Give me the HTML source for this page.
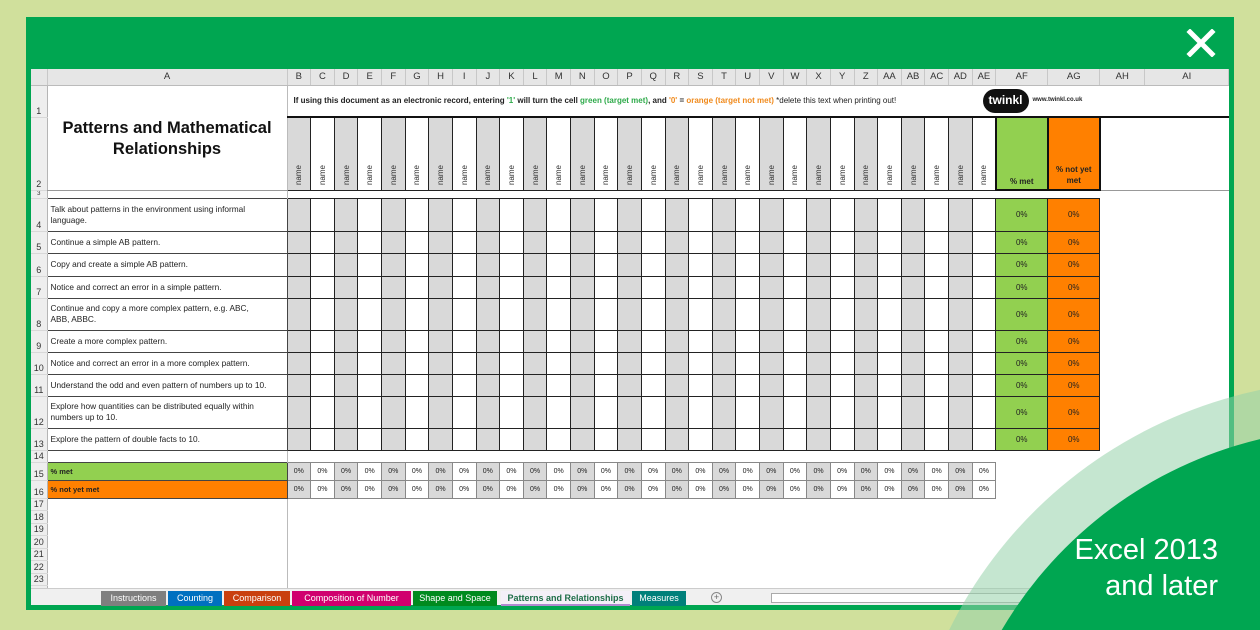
<!DOCTYPE html>
<html style="width:1260px;height:630px;overflow:hidden"><head><meta charset="utf-8">
<style>
*{box-sizing:border-box;margin:0;padding:0}
body{width:1260px;height:630px;background:#d0e09c;overflow:hidden;font-family:"Liberation Sans",Arial,sans-serif}
#wrap{position:relative;width:1260px;height:630px;overflow:hidden}
#frame{position:absolute;left:26px;top:17px;width:1208px;height:593px;background:#00a651}
#sheet{position:absolute;left:31px;top:69px;width:1198px;height:519px;background:#fff;overflow:hidden}
table{border-collapse:collapse;table-layout:fixed;width:1198px}
td{padding:0;overflow:hidden;white-space:nowrap;font-size:8px;color:#222;text-align:center;vertical-align:middle}
tr.h td{background:#e6e6e6;border-right:1px solid #c8c8c8;border-bottom:1px solid #bbb;font-size:9.5px;color:#333;height:16px}
td.rh{background:#eeeeee;border-right:1px solid #b5b5b5;border-bottom:1px solid #d8d8d8;font-size:9px;color:#333;vertical-align:bottom;padding-bottom:1px}
td.a{text-align:left;padding-left:3px;padding-right:20px;white-space:normal;line-height:11px;border:1px solid #444;font-size:8.3px}
.d td.c{border:1px solid #222}
td.g{background:#d9d9d9}
td.af{background:#92d050;border:1px solid #222}
td.ag{background:#ff8000;border:1px solid #222}
td.n{border:1px solid #222;vertical-align:bottom;padding-bottom:2px}
td.n i{font-style:normal;writing-mode:vertical-rl;transform:rotate(180deg);display:inline-block;font-size:8px;color:#333}
td.p{border:1px solid #888;font-size:7px}
#tabs{position:absolute;left:31px;top:588px;width:1198px;height:17px;background:#f0f0f0;border-top:1px solid #ccc}
.tab{position:absolute;top:2px;height:15px;color:#fff;font-size:9px;text-align:center;line-height:14px}
</style></head><body><div id="wrap">
<div id="frame"></div>
<svg style="position:absolute;left:1186px;top:29px" width="30" height="28"><path d="M4 3 L26 25 M26 3 L4 25" stroke="#fff" stroke-width="5" stroke-linecap="square"/></svg>
<div id="sheet">
<table>
<colgroup><col style="width:16px"><col style="width:240px">
<col span="30" style="width:23.633px">
<col style="width:52px"><col style="width:52px"><col style="width:45px"><col style="width:84px"></colgroup>
<tr class="h"><td></td><td>A</td><td>B</td><td>C</td><td>D</td><td>E</td><td>F</td><td>G</td><td>H</td><td>I</td><td>J</td><td>K</td><td>L</td><td>M</td><td>N</td><td>O</td><td>P</td><td>Q</td><td>R</td><td>S</td><td>T</td><td>U</td><td>V</td><td>W</td><td>X</td><td>Y</td><td>Z</td><td>AA</td><td>AB</td><td>AC</td><td>AD</td><td>AE</td><td>AF</td><td>AG</td><td>AH</td><td>AI</td></tr>
<tr style="height:32px"><td class="rh">1</td><td rowspan="2" style="vertical-align:top;padding-top:32px;font-size:16.5px;font-weight:bold;white-space:normal;line-height:21px;color:#111;border-right:1px solid #bbb;border-bottom:1px solid #999">Patterns and Mathematical Relationships</td>
<td colspan="34" style="text-align:left;padding-left:6px;font-size:8px;font-weight:bold;position:relative;border-bottom:2px solid #111">If using this document as an electronic record, entering <span style="color:#2eaa4a">'1'</span> will turn the cell <span style="color:#2eaa4a">green (target met)</span>, and <span style="color:#f08a1c">'0'</span> = <span style="color:#f08a1c">orange (target not met)</span> <span style="font-weight:normal">*delete this text when printing out!</span>
<span style="position:absolute;left:695px;top:3px;width:46px;height:24px;background:#111;border-radius:12px;color:#fff;font-size:12px;line-height:22px;text-align:center;font-weight:bold">twinkl</span><span style="position:absolute;left:745px;top:11px;font-size:6px;font-weight:bold">www.twinkl.co.uk</span></td></tr>
<tr style="height:73px" class="d"><td class="rh">2</td>
<td class="g n"><i>name</i></td><td class="n"><i>name</i></td><td class="g n"><i>name</i></td><td class="n"><i>name</i></td><td class="g n"><i>name</i></td><td class="n"><i>name</i></td><td class="g n"><i>name</i></td><td class="n"><i>name</i></td><td class="g n"><i>name</i></td><td class="n"><i>name</i></td><td class="g n"><i>name</i></td><td class="n"><i>name</i></td><td class="g n"><i>name</i></td><td class="n"><i>name</i></td><td class="g n"><i>name</i></td><td class="n"><i>name</i></td><td class="g n"><i>name</i></td><td class="n"><i>name</i></td><td class="g n"><i>name</i></td><td class="n"><i>name</i></td><td class="g n"><i>name</i></td><td class="n"><i>name</i></td><td class="g n"><i>name</i></td><td class="n"><i>name</i></td><td class="g n"><i>name</i></td><td class="n"><i>name</i></td><td class="g n"><i>name</i></td><td class="n"><i>name</i></td><td class="g n"><i>name</i></td><td class="n"><i>name</i></td>
<td class="af" style="vertical-align:bottom;padding-bottom:3px;font-weight:bold;border:2px solid #111">% met</td><td class="ag" style="vertical-align:bottom;padding-bottom:3px;font-weight:bold;white-space:normal;line-height:11px;border:2px solid #111">% not yet met</td><td style="border-bottom:1px solid #999"></td><td style="border-bottom:1px solid #999"></td></tr>
<tr style="height:7px"><td class="rh" style="font-size:6px;line-height:6px">3</td><td style="border-right:1px solid #bbb"></td><td colspan="34"></td></tr>

<tr style="height:33px" class="d"><td class="rh">4</td><td class="a">Talk about patterns in the environment using informal language.</td><td class="c g"></td><td class="c"></td><td class="c g"></td><td class="c"></td><td class="c g"></td><td class="c"></td><td class="c g"></td><td class="c"></td><td class="c g"></td><td class="c"></td><td class="c g"></td><td class="c"></td><td class="c g"></td><td class="c"></td><td class="c g"></td><td class="c"></td><td class="c g"></td><td class="c"></td><td class="c g"></td><td class="c"></td><td class="c g"></td><td class="c"></td><td class="c g"></td><td class="c"></td><td class="c g"></td><td class="c"></td><td class="c g"></td><td class="c"></td><td class="c g"></td><td class="c"></td><td class="af">0%</td><td class="ag">0%</td><td></td><td></td></tr>
<tr style="height:22px" class="d"><td class="rh">5</td><td class="a">Continue a simple AB pattern.</td><td class="c g"></td><td class="c"></td><td class="c g"></td><td class="c"></td><td class="c g"></td><td class="c"></td><td class="c g"></td><td class="c"></td><td class="c g"></td><td class="c"></td><td class="c g"></td><td class="c"></td><td class="c g"></td><td class="c"></td><td class="c g"></td><td class="c"></td><td class="c g"></td><td class="c"></td><td class="c g"></td><td class="c"></td><td class="c g"></td><td class="c"></td><td class="c g"></td><td class="c"></td><td class="c g"></td><td class="c"></td><td class="c g"></td><td class="c"></td><td class="c g"></td><td class="c"></td><td class="af">0%</td><td class="ag">0%</td><td></td><td></td></tr>
<tr style="height:23px" class="d"><td class="rh">6</td><td class="a">Copy and create a simple AB pattern.</td><td class="c g"></td><td class="c"></td><td class="c g"></td><td class="c"></td><td class="c g"></td><td class="c"></td><td class="c g"></td><td class="c"></td><td class="c g"></td><td class="c"></td><td class="c g"></td><td class="c"></td><td class="c g"></td><td class="c"></td><td class="c g"></td><td class="c"></td><td class="c g"></td><td class="c"></td><td class="c g"></td><td class="c"></td><td class="c g"></td><td class="c"></td><td class="c g"></td><td class="c"></td><td class="c g"></td><td class="c"></td><td class="c g"></td><td class="c"></td><td class="c g"></td><td class="c"></td><td class="af">0%</td><td class="ag">0%</td><td></td><td></td></tr>
<tr style="height:22px" class="d"><td class="rh">7</td><td class="a">Notice and correct an error in a simple pattern.</td><td class="c g"></td><td class="c"></td><td class="c g"></td><td class="c"></td><td class="c g"></td><td class="c"></td><td class="c g"></td><td class="c"></td><td class="c g"></td><td class="c"></td><td class="c g"></td><td class="c"></td><td class="c g"></td><td class="c"></td><td class="c g"></td><td class="c"></td><td class="c g"></td><td class="c"></td><td class="c g"></td><td class="c"></td><td class="c g"></td><td class="c"></td><td class="c g"></td><td class="c"></td><td class="c g"></td><td class="c"></td><td class="c g"></td><td class="c"></td><td class="c g"></td><td class="c"></td><td class="af">0%</td><td class="ag">0%</td><td></td><td></td></tr>
<tr style="height:32px" class="d"><td class="rh">8</td><td class="a">Continue and copy a more complex pattern, e.g. ABC, ABB, ABBC.</td><td class="c g"></td><td class="c"></td><td class="c g"></td><td class="c"></td><td class="c g"></td><td class="c"></td><td class="c g"></td><td class="c"></td><td class="c g"></td><td class="c"></td><td class="c g"></td><td class="c"></td><td class="c g"></td><td class="c"></td><td class="c g"></td><td class="c"></td><td class="c g"></td><td class="c"></td><td class="c g"></td><td class="c"></td><td class="c g"></td><td class="c"></td><td class="c g"></td><td class="c"></td><td class="c g"></td><td class="c"></td><td class="c g"></td><td class="c"></td><td class="c g"></td><td class="c"></td><td class="af">0%</td><td class="ag">0%</td><td></td><td></td></tr>
<tr style="height:22px" class="d"><td class="rh">9</td><td class="a">Create a more complex pattern.</td><td class="c g"></td><td class="c"></td><td class="c g"></td><td class="c"></td><td class="c g"></td><td class="c"></td><td class="c g"></td><td class="c"></td><td class="c g"></td><td class="c"></td><td class="c g"></td><td class="c"></td><td class="c g"></td><td class="c"></td><td class="c g"></td><td class="c"></td><td class="c g"></td><td class="c"></td><td class="c g"></td><td class="c"></td><td class="c g"></td><td class="c"></td><td class="c g"></td><td class="c"></td><td class="c g"></td><td class="c"></td><td class="c g"></td><td class="c"></td><td class="c g"></td><td class="c"></td><td class="af">0%</td><td class="ag">0%</td><td></td><td></td></tr>
<tr style="height:22px" class="d"><td class="rh">10</td><td class="a">Notice and correct an error in a more complex pattern.</td><td class="c g"></td><td class="c"></td><td class="c g"></td><td class="c"></td><td class="c g"></td><td class="c"></td><td class="c g"></td><td class="c"></td><td class="c g"></td><td class="c"></td><td class="c g"></td><td class="c"></td><td class="c g"></td><td class="c"></td><td class="c g"></td><td class="c"></td><td class="c g"></td><td class="c"></td><td class="c g"></td><td class="c"></td><td class="c g"></td><td class="c"></td><td class="c g"></td><td class="c"></td><td class="c g"></td><td class="c"></td><td class="c g"></td><td class="c"></td><td class="c g"></td><td class="c"></td><td class="af">0%</td><td class="ag">0%</td><td></td><td></td></tr>
<tr style="height:22px" class="d"><td class="rh">11</td><td class="a">Understand the odd and even pattern of numbers up to 10.</td><td class="c g"></td><td class="c"></td><td class="c g"></td><td class="c"></td><td class="c g"></td><td class="c"></td><td class="c g"></td><td class="c"></td><td class="c g"></td><td class="c"></td><td class="c g"></td><td class="c"></td><td class="c g"></td><td class="c"></td><td class="c g"></td><td class="c"></td><td class="c g"></td><td class="c"></td><td class="c g"></td><td class="c"></td><td class="c g"></td><td class="c"></td><td class="c g"></td><td class="c"></td><td class="c g"></td><td class="c"></td><td class="c g"></td><td class="c"></td><td class="c g"></td><td class="c"></td><td class="af">0%</td><td class="ag">0%</td><td></td><td></td></tr>
<tr style="height:32px" class="d"><td class="rh">12</td><td class="a">Explore how quantities can be distributed equally within numbers up to 10.</td><td class="c g"></td><td class="c"></td><td class="c g"></td><td class="c"></td><td class="c g"></td><td class="c"></td><td class="c g"></td><td class="c"></td><td class="c g"></td><td class="c"></td><td class="c g"></td><td class="c"></td><td class="c g"></td><td class="c"></td><td class="c g"></td><td class="c"></td><td class="c g"></td><td class="c"></td><td class="c g"></td><td class="c"></td><td class="c g"></td><td class="c"></td><td class="c g"></td><td class="c"></td><td class="c g"></td><td class="c"></td><td class="c g"></td><td class="c"></td><td class="c g"></td><td class="c"></td><td class="af">0%</td><td class="ag">0%</td><td></td><td></td></tr>
<tr style="height:22px" class="d"><td class="rh">13</td><td class="a">Explore the pattern of double facts to 10.</td><td class="c g"></td><td class="c"></td><td class="c g"></td><td class="c"></td><td class="c g"></td><td class="c"></td><td class="c g"></td><td class="c"></td><td class="c g"></td><td class="c"></td><td class="c g"></td><td class="c"></td><td class="c g"></td><td class="c"></td><td class="c g"></td><td class="c"></td><td class="c g"></td><td class="c"></td><td class="c g"></td><td class="c"></td><td class="c g"></td><td class="c"></td><td class="c g"></td><td class="c"></td><td class="c g"></td><td class="c"></td><td class="c g"></td><td class="c"></td><td class="c g"></td><td class="c"></td><td class="af">0%</td><td class="ag">0%</td><td></td><td></td></tr>
<tr style="height:11px"><td class="rh">14</td><td style="border-right:1px solid #bbb"></td><td colspan="34"></td></tr>
<tr style="height:18px"><td class="rh">15</td><td class="a" style="background:#92d050;font-weight:bold;font-size:7.5px">% met</td><td class="p g">0%</td><td class="p">0%</td><td class="p g">0%</td><td class="p">0%</td><td class="p g">0%</td><td class="p">0%</td><td class="p g">0%</td><td class="p">0%</td><td class="p g">0%</td><td class="p">0%</td><td class="p g">0%</td><td class="p">0%</td><td class="p g">0%</td><td class="p">0%</td><td class="p g">0%</td><td class="p">0%</td><td class="p g">0%</td><td class="p">0%</td><td class="p g">0%</td><td class="p">0%</td><td class="p g">0%</td><td class="p">0%</td><td class="p g">0%</td><td class="p">0%</td><td class="p g">0%</td><td class="p">0%</td><td class="p g">0%</td><td class="p">0%</td><td class="p g">0%</td><td class="p">0%</td><td></td><td></td><td></td><td></td></tr>
<tr style="height:18px"><td class="rh">16</td><td class="a" style="background:#ff8000;font-weight:bold;font-size:7.5px">% not yet met</td><td class="p g">0%</td><td class="p">0%</td><td class="p g">0%</td><td class="p">0%</td><td class="p g">0%</td><td class="p">0%</td><td class="p g">0%</td><td class="p">0%</td><td class="p g">0%</td><td class="p">0%</td><td class="p g">0%</td><td class="p">0%</td><td class="p g">0%</td><td class="p">0%</td><td class="p g">0%</td><td class="p">0%</td><td class="p g">0%</td><td class="p">0%</td><td class="p g">0%</td><td class="p">0%</td><td class="p g">0%</td><td class="p">0%</td><td class="p g">0%</td><td class="p">0%</td><td class="p g">0%</td><td class="p">0%</td><td class="p g">0%</td><td class="p">0%</td><td class="p g">0%</td><td class="p">0%</td><td></td><td></td><td></td><td></td></tr>
<tr style="height:12.5px"><td class="rh">17</td><td style="border-right:1px solid #bbb"></td><td colspan="34"></td></tr>
<tr style="height:12.5px"><td class="rh">18</td><td style="border-right:1px solid #bbb"></td><td colspan="34"></td></tr>
<tr style="height:12.5px"><td class="rh">19</td><td style="border-right:1px solid #bbb"></td><td colspan="34"></td></tr>
<tr style="height:12.5px"><td class="rh">20</td><td style="border-right:1px solid #bbb"></td><td colspan="34"></td></tr>
<tr style="height:12.5px"><td class="rh">21</td><td style="border-right:1px solid #bbb"></td><td colspan="34"></td></tr>
<tr style="height:12.5px"><td class="rh">22</td><td style="border-right:1px solid #bbb"></td><td colspan="34"></td></tr>
<tr style="height:12.5px"><td class="rh">23</td><td style="border-right:1px solid #bbb"></td><td colspan="34"></td></tr>
<tr style="height:12.5px"><td class="rh">24</td><td style="border-right:1px solid #bbb"></td><td colspan="34"></td></tr>
</table>
</div>
<div id="tabs">
<div class="tab" style="left:70px;width:65px;background:#7f7f7f">Instructions</div>
<div class="tab" style="left:137px;width:54px;background:#0070c0">Counting</div>
<div class="tab" style="left:193px;width:66px;background:#c9400f">Comparison</div>
<div class="tab" style="left:261px;width:119px;background:#d0006e">Composition of Number</div>
<div class="tab" style="left:382px;width:84px;background:#008a1e">Shape and Space</div>
<div class="tab" style="left:470px;width:129px;background:#f4f0f8;color:#1e6e48;font-weight:bold;border-bottom:2px solid #b08ad0">Patterns and Relationships</div>
<div class="tab" style="left:601px;width:54px;background:#00807a">Measures</div>
<div style="position:absolute;left:680px;top:3px;width:11px;height:11px;border:1px solid #888;border-radius:50%;font-size:9px;line-height:9px;text-align:center;color:#666">+</div>
<div style="position:absolute;left:740px;top:4px;width:460px;height:10px;background:#fff;border:1px solid #aaa"></div>
</div>
<div style="position:absolute;left:905px;top:380px;width:900px;height:880px;border-radius:50%;background:rgba(150,210,170,0.55)"></div>
<div style="position:absolute;left:945px;top:428px;width:820px;height:820px;border-radius:50%;background:#00a651"></div>
<div style="position:absolute;right:42px;top:532px;color:#fff;font-size:29px;line-height:36px;text-align:right">Excel 2013<br>and later</div>
</div></body></html>
